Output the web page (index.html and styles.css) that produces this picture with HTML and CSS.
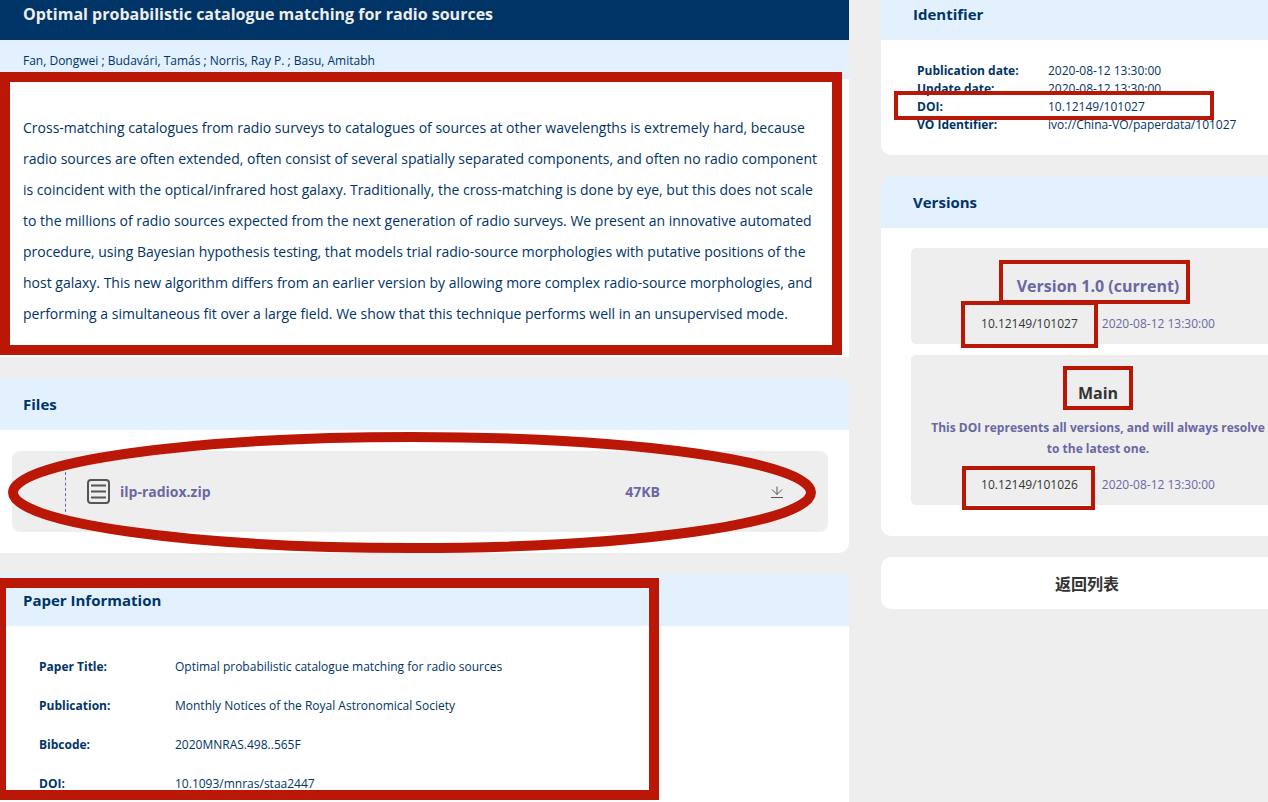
FILE: index.html
```html
<!DOCTYPE html>
<html lang="en">
<head>
    <meta charset="UTF-8">
    <meta name="viewport" content="width=device-width, initial-scale=1.0">
    <title>Optimal probabilistic catalogue matching for radio sources</title>
    <link rel="stylesheet" href="styles.css">
</head>
<body>
    <div class="page">
        <main class="column">
            <section class="paper">
                <h1>Optimal probabilistic catalogue matching for radio sources</h1>
                <p class="authors">Fan, Dongwei ; Budavári, Tamás ; Norris, Ray P. ; Basu, Amitabh</p>
                <p class="abstract">
                    Cross-matching catalogues from radio surveys to catalogues of sources at other wavelengths is extremely hard, because<br>
                    radio sources are often extended, often consist of several spatially separated components, and often no radio component<br>
                    is coincident with the optical/infrared host galaxy. Traditionally, the cross-matching is done by eye, but this does not scale<br>
                    to the millions of radio sources expected from the next generation of radio surveys. We present an innovative automated<br>
                    procedure, using Bayesian hypothesis testing, that models trial radio-source morphologies with putative positions of the<br>
                    host galaxy. This new algorithm differs from an earlier version by allowing more complex radio-source morphologies, and<br>
                    performing a simultaneous fit over a large field. We show that this technique performs well in an unsupervised mode.
                </p>
                <span class="mark mark-abstract"></span>
            </section>

            <section class="panel">
                <h2>Files</h2>
                <div class="files">
                    <div class="file">
                        <svg class="file-icon" viewBox="0 0 24 26" aria-hidden="true">
                            <rect x="1" y="1" width="21" height="23" rx="3"/>
                            <path d="M4 6.5h15M4 12.5h15M4 18.5h15"/>
                        </svg>
                        <a class="file-name" href="#">ilp-radiox.zip</a>
                        <span class="file-size">47KB</span>
                        <a class="download" href="#" aria-label="Download">
                            <svg viewBox="0 0 14 14" aria-hidden="true">
                                <path d="M7 1.500v8M2 4.500L7 9.500l5-5M1 12.500h12"/>
                            </svg>
                        </a>
                    </div>
                    <svg class="mark-files" viewBox="0 0 808 121" preserveAspectRatio="none" aria-hidden="true">
                        <ellipse cx="404" cy="60.500" rx="399" ry="55.500"/>
                    </svg>
                </div>
            </section>

            <section class="panel panel-open">
                <h2>Paper Information</h2>
                <div class="info">
                    <table>
                        <tr><th scope="row">Paper Title:</th><td>Optimal probabilistic catalogue matching for radio sources</td></tr>
                        <tr><th scope="row">Publication:</th><td>Monthly Notices of the Royal Astronomical Society</td></tr>
                        <tr><th scope="row">Bibcode:</th><td>2020MNRAS.498..565F</td></tr>
                        <tr><th scope="row">DOI:</th><td>10.1093/mnras/staa2447</td></tr>
                    </table>
                </div>
                <span class="mark mark-info"></span>
            </section>
        </main>

        <aside class="column">
            <section class="panel">
                <h2>Identifier</h2>
                <div class="identifier">
                    <table>
                        <tr><th scope="row">Publication date:</th><td>2020-08-12 13:30:00</td></tr>
                        <tr><th scope="row">Update date:</th><td>2020-08-12 13:30:00</td></tr>
                        <tr><th scope="row">DOI:</th><td>10.12149/101027</td></tr>
                        <tr><th scope="row">VO Identifier:</th><td>ivo://China-VO/paperdata/101027</td></tr>
                    </table>
                </div>
                <span class="mark mark-doi"></span>
            </section>

            <section class="panel">
                <h2>Versions</h2>
                <div class="versions">
                    <div class="version">
                        <h3 class="current">Version 1.0 (current)</h3>
                        <p class="version-meta"><a href="#">10.12149/101027</a><time>2020-08-12 13:30:00</time></p>
                        <span class="mark mark-version"></span>
                        <span class="mark mark-version-doi"></span>
                    </div>
                    <div class="version">
                        <h3>Main</h3>
                        <p class="version-note">This DOI represents all versions, and will always resolve<br>to the latest one.</p>
                        <p class="version-meta"><a href="#">10.12149/101026</a><time>2020-08-12 13:30:00</time></p>
                        <span class="mark mark-main"></span>
                        <span class="mark mark-main-doi"></span>
                    </div>
                </div>
            </section>

            <button type="button" class="back" lang="zh-CN">返回列表</button>
        </aside>
    </div>
</body>
</html>
```

FILE: styles.css
```css
* {
    box-sizing: border-box;
}

body {
    margin: 0;
    background-color: #eee;
    color: #003466;
    font-family: "Open Sans", "Noto Sans", "Noto Sans CJK SC", sans-serif;
    font-size: 12px;
    overflow-x: hidden;
}

h1, h2, h3, p {
    margin: 0;
}

a {
    color: inherit;
    text-decoration: none;
}

/* the page bleeds past the window on three sides */
.page {
    display: grid;
    grid-template-columns: minmax(0, 858fr) minmax(0, 412fr);
    column-gap: 32px;
    margin: -12px -25px 0 -9px;
}

.column {
    display: flex;
    flex-direction: column;
    gap: 21px;
}

.paper,
.panel {
    position: relative;
    background-color: #fff;
}

.panel {
    border-radius: 10px;
}

.panel-open {
    border-radius: 10px 10px 0 0;
}

h1, h2 {
    height: 52px;
    padding-left: 32px;
    font-size: 15px;
    line-height: 52px;
}

h1 {
    background-color: #003466;
    color: #eee;
    font-size: 16px;
}

h2 {
    background-color: #e3f1ff;
    border-radius: 10px 10px 0 0;
}

.authors {
    padding: 2px 32px 0;
    background-color: #e3f1ff;
    line-height: 37px;
}

.abstract {
    padding: 33px 32px 28px;
    font-size: 14px;
    line-height: 31px;
    white-space: nowrap;
}

/* Files */
.files {
    position: relative;
    padding: 21px;
}

.file {
    display: flex;
    align-items: center;
    height: 81px;
    padding: 0 44px 0 53px;
    border-radius: 8px;
    background-color: #eee;
    color: #6a67a2;
    font-size: 14px;
    font-weight: 700;
}

.file::before {
    content: "";
    height: 40px;
    margin-right: 21px;
    border-left: 1px dashed #6a67a2;
}

.file-icon {
    width: 24px;
    height: 26px;
    margin-right: 9px;
    fill: none;
    stroke: #555;
    stroke-width: 2;
}

.file-name {
    flex: 1;
}

.file-size {
    margin-right: 110px;
}

.download {
    display: flex;
}

.download svg {
    width: 14px;
    height: 14px;
    fill: none;
    stroke: #555;
}

/* Tables */
table {
    border-spacing: 0;
}

th {
    text-align: left;
}

th, td {
    padding: 0;
}

.info {
    padding: 21px 48px 0;
}

.info th {
    width: 136px;
}

.info tr {
    height: 39px;
}

.identifier {
    padding: 22px 36px 21px;
    line-height: 18px;
}

.identifier th {
    width: 131px;
}

/* Versions */
.versions {
    display: grid;
    gap: 11px;
    padding: 20px 8px 31px 30px;
}

.version {
    position: relative;
    padding: 26px 0 10px;
    border-radius: 5px;
    background-color: #eee;
    color: #6a67a2;
    text-align: center;
}

.version h3 {
    color: #333;
    font-size: 16px;
    line-height: 24px;
}

.version .current {
    color: #6a67a2;
}

.version-note {
    padding-top: 12px;
    font-weight: 700;
    line-height: 21px;
    white-space: nowrap;
}

.version-meta {
    display: flex;
    justify-content: center;
    gap: 24px;
    padding-top: 16px;
    line-height: 20px;
}

.version-meta a {
    color: #333;
}

.back {
    height: 52px;
    border: 0;
    border-radius: 10px;
    background-color: #fff;
    color: #333;
    font-family: "Noto Sans CJK SC", sans-serif;
    font-size: 16px;
    font-weight: 700;
    cursor: pointer;
}

/* Red highlight frames drawn over the content */
.mark {
    position: absolute;
    border: 4px solid #bb1706;
    pointer-events: none;
}

.mark-abstract {
    top: 84px;
    right: 7px;
    bottom: 2px;
    left: 9px;
    border-width: 10px;
}

.mark-files {
    position: absolute;
    top: 2px;
    left: 17px;
    width: calc(100% - 50px);
    height: 121px;
    fill: none;
    stroke: #bb1706;
    stroke-width: 10;
    pointer-events: none;
}

.mark-info {
    top: 4px;
    right: 190px;
    bottom: 3px;
    left: 5px;
    border-width: 10px;
}

.mark-doi {
    top: 103px;
    left: 13px;
    width: 320px;
    height: 29px;
}

.mark-version {
    top: 12px;
    left: 88px;
    width: 191px;
    height: 44px;
}

.mark-version-doi {
    top: 53px;
    left: 50px;
    width: 137px;
    height: 47px;
}

.mark-main {
    top: 11px;
    left: 152px;
    width: 70px;
    height: 44px;
}

.mark-main-doi {
    top: 111px;
    left: 51px;
    width: 133px;
    height: 44px;
}
```
